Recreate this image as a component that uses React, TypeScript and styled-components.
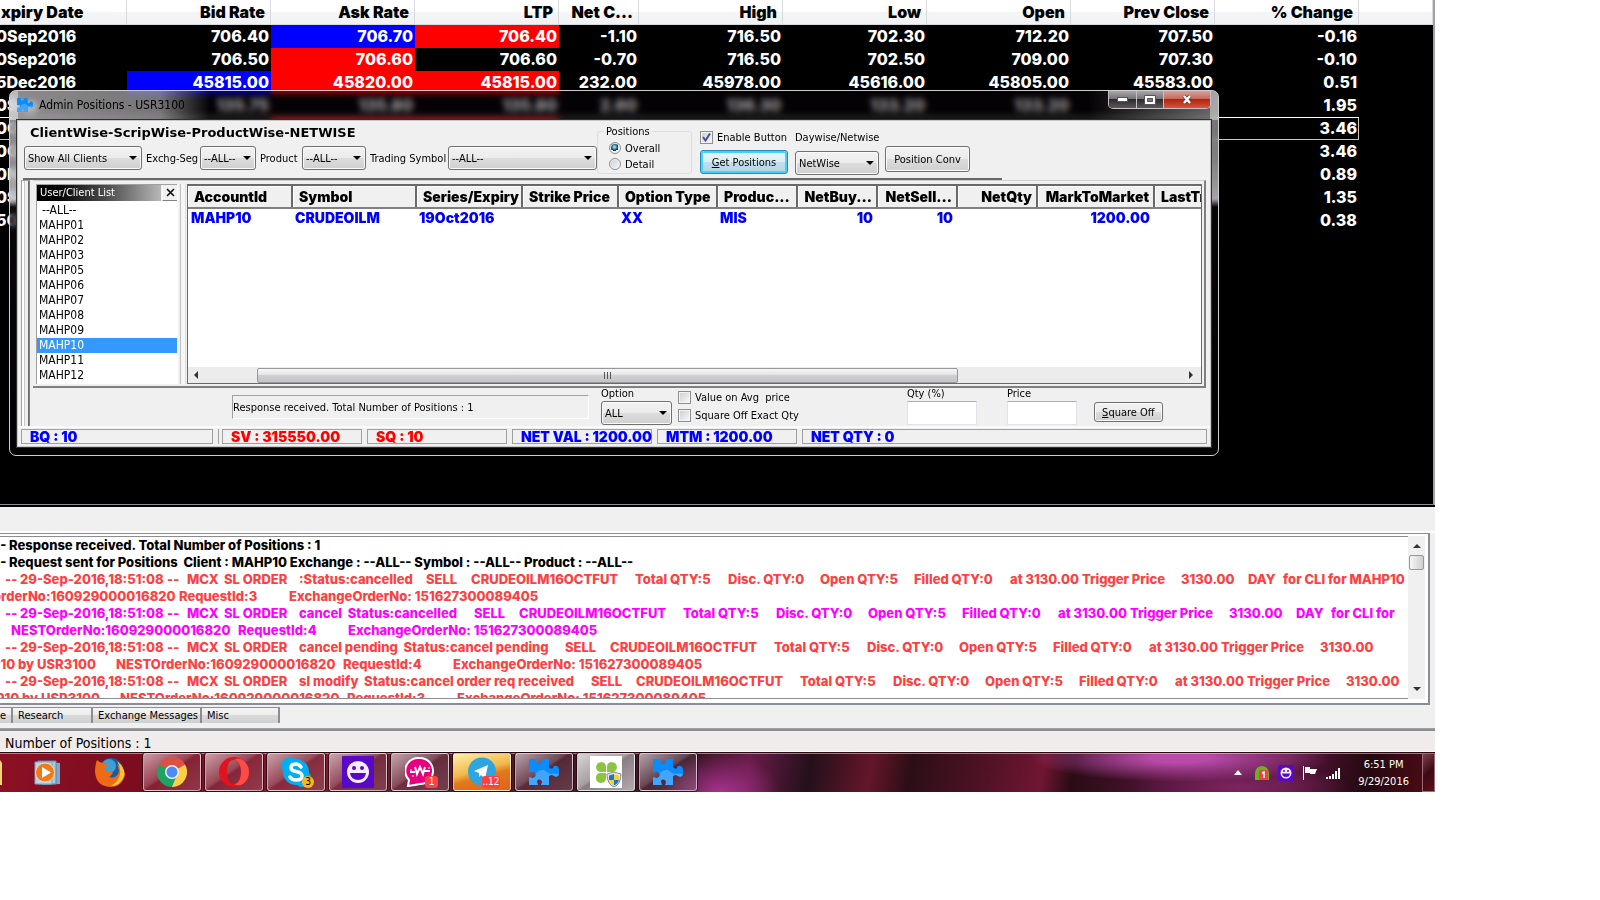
import React from 'react';
import styled, { createGlobalStyle, css } from 'styled-components';

const UI = '"DejaVu Sans Condensed", "Noto Sans", sans-serif';
const HEAVY = 'Inter, "Liberation Sans", sans-serif';

const Global = createGlobalStyle`
  *, *::before, *::after { box-sizing: border-box; }
  body { margin: 0; background: #fff; font: 11px/15px ${UI}; color: #000; }
  button, input, select { font: inherit; color: inherit; margin: 0; }
  table { border-collapse: collapse; border-spacing: 0; }
`;

const Desktop = styled.div`
  position: relative;
  margin-right: 165px;
  min-width: 1230px;
  overflow: hidden;
`;

/* ---------- market watch ---------- */

const Market = styled.section`
  height: 505px;
  background: #000;
  border-right: 2px solid #a0a0a8;
  border-bottom: 1px solid #8c8c94;
`;

const MarketTable = styled.table`
  width: 100%;
  table-layout: fixed;
  font: 800 16px/23px ${HEAVY};
  color: #fff;
`;

const MarketHead = styled.th<{ $left?: boolean }>`
  height: 25px;
  padding: 0 6px 0 1px;
  text-align: ${p => (p.$left ? 'left' : 'right')};
  font-weight: 900;
  line-height: 25px;
  color: #000;
  white-space: nowrap;
  background: linear-gradient(#fff 0 45%, #f4f5f7 50%, #f0f1f3);
  box-shadow: inset -1px -1px #d8d9dc;
`;

type Tone = 'up' | 'down' | undefined;

const MarketCell = styled.td<{ $tone?: Tone; $left?: boolean }>`
  height: 23px;
  padding: 0 2px 0 0;
  text-align: ${p => (p.$left ? 'left' : 'right')};
  ${p => p.$left && css`text-indent: -4px;`}
  white-space: nowrap;
  background: ${p => (p.$tone === 'up' ? '#0000ff' : p.$tone === 'down' ? '#ff0000' : '#000')};
`;

const MarketRow = styled.tr<{ $focus?: boolean }>`
  ${p => p.$focus && css`
    & > td:not(:last-child) { box-shadow: inset 0 1px #fff, inset 0 -1px #c8c8c8; }
    & > td:nth-last-child(2) { box-shadow: inset 0 1px #fff, inset -1px -1px #c8c8c8; }
  `}
`;

const COLS = [127, 144, 144, 144, 80, 144, 144, 144, 144, 144];
const HEADS = ['xpiry Date', 'Bid Rate', 'Ask Rate', 'LTP', 'Net C...', 'High', 'Low', 'Open', 'Prev Close', '% Change'];
const QUOTES: { cells: string[]; tone?: Record<number, Tone>; focus?: boolean }[] = [
  { cells: ['0Sep2016', '706.40', '706.70', '706.40', '-1.10', '716.50', '702.30', '712.20', '707.50', '-0.16'], tone: { 2: 'up', 3: 'down' } },
  { cells: ['0Sep2016', '706.50', '706.60', '706.60', '-0.70', '716.50', '702.50', '709.00', '707.30', '-0.10'], tone: { 2: 'down' } },
  { cells: ['5Dec2016', '45815.00', '45820.00', '45815.00', '232.00', '45978.00', '45616.00', '45805.00', '45583.00', '0.51'], tone: { 1: 'up', 2: 'down', 3: 'down' } },
  { cells: ['0Sep', '135.75', '135.80', '135.80', '2.60', '136.30', '133.20', '133.20', '', '1.95'] },
  { cells: ['0Oct', '', '', '', '', '', '', '', '', '3.46'], tone: { 2: 'down', 3: 'down' }, focus: true },
  { cells: ['0Oct', '', '', '', '', '', '', '', '', '3.46'] },
  { cells: ['0Nov', '', '', '', '', '', '', '', '', '0.89'] },
  { cells: ['0Sep', '', '', '', '', '', '', '', '', '1.35'] },
  { cells: ['5Oct', '', '', '', '', '', '', '', '', '0.38'] },
];

/* ---------- floating window ---------- */

const Win = styled.section`
  position: absolute;
  left: 9px;
  right: 216px;
  top: 90px;
  padding: 0 7px 8px;
  border: 1px solid #cfcdd0;
  border-radius: 7px;
  background:
    linear-gradient(90deg, rgba(255,255,255,.55), rgba(255,255,255,.45) 150px, rgba(255,255,255,0) 200px) 0 0 / 100% 29px no-repeat,
    linear-gradient(270deg, rgba(255,255,255,.4), rgba(255,255,255,0) 130px) 0 0 / 100% 29px no-repeat,
    linear-gradient(rgba(255,255,255,.4), rgba(255,255,255,.55) 75px, rgba(235,230,238,.75) 108px, rgba(20,16,22,.2) 116px, rgba(0,0,0,0)) 0 0 / 8px 100% no-repeat,
    linear-gradient(rgba(255,255,255,.4), rgba(255,255,255,.5) 70px, rgba(235,230,238,.7) 108px, rgba(20,16,22,.2) 116px, rgba(0,0,0,0)) 100% 0 / 8px 100% no-repeat,
    rgba(12, 6, 12, .4);
  backdrop-filter: blur(3px);
`;

const TitleBar = styled.header`
  display: flex;
  align-items: flex-start;
  height: 29px;
`;

const Title = styled.h1`
  display: flex;
  align-items: center;
  gap: 6px;
  flex: 1;
  height: 28px;
  margin: 0;
  font: 12px/16px ${UI};
`;

const Caption = styled.div`
  display: flex;
  border: 1px solid #c5c0c5;
  border-top: 0;
  border-radius: 0 0 5px 5px;
  overflow: hidden;
`;

const CaptionButton = styled.button<{ $close?: boolean }>`
  display: grid;
  place-items: center;
  width: ${p => (p.$close ? 47 : 27)}px;
  height: 17px;
  padding: 0;
  border: 0;
  border-left: 1px solid #c5c0c5;
  &:first-child { border-left: 0; }
  background: ${p => (p.$close
    ? 'linear-gradient(#d9a09a, #c9695c 45%, #b3240e 50%, #d4553a)'
    : 'linear-gradient(#a9a6a9, #77747a 45%, #2d292d 50%, #5b575b)')};
`;

const Client = styled.div`
  border: 1px solid #c8c8c8;
  box-shadow: 0 0 0 1px #303030;
  background: #f0f0f0;
`;

const ToolBar = styled.form`
  display: flex;
  align-items: flex-start;
  height: 57px;
  padding: 3px 0 0 6px;
`;

const Filters = styled.div`
  flex: none;
  width: 573px;
`;

const Heading = styled.h2`
  margin: 0 0 5px;
  padding-left: 6px;
  font: bold 13px/17px "DejaVu Sans", sans-serif;
`;

const FilterRow = styled.div`
  display: flex;
  align-items: center;
  gap: 4px;
`;

const FieldLabel = styled.label<{ $w?: number; $tight?: boolean }>`
  flex: none;
  width: ${p => (p.$w ? `${p.$w}px` : 'auto')};
  line-height: ${p => (p.$tight ? 10 : 15)}px;
  white-space: nowrap;
`;

const SelectBox = styled.span<{ $w: number }>`
  position: relative;
  display: block;
  flex: none;
  width: ${p => p.$w}px;
  height: 24px;
  &::after {
    content: '';
    position: absolute;
    right: 5px;
    top: 10px;
    border: 4px solid transparent;
    border-top-color: #000;
    border-bottom: 0;
    pointer-events: none;
  }
  select {
    appearance: none;
    width: 100%;
    height: 100%;
    padding: 0 12px 0 3px;
    border: 1px solid #707070;
    border-radius: 3px;
    box-shadow: inset 0 0 0 1px #fafafa;
    background: linear-gradient(#f2f2f2, #ebebeb 50%, #dddddd 50%, #cfcfcf);
  }
`;

const Button = styled.button<{ $w: number; $h: number; $hot?: boolean }>`
  width: ${p => p.$w}px;
  height: ${p => p.$h}px;
  padding: 0;
  white-space: nowrap;
  border: 1px solid ${p => (p.$hot ? '#2c88b8' : '#707070')};
  border-radius: 3px;
  box-shadow: inset 0 0 0 ${p => (p.$hot ? '2px #48d1f8' : '1px #fafafa')};
  background: ${p => (p.$hot
    ? 'linear-gradient(#eaf4f9, #dcedf5 50%, #c4dfeb 50%, #b0d5e6)'
    : 'linear-gradient(#f2f2f2, #ebebeb 50%, #dddddd 50%, #cfcfcf)')};
`;

const PositionsBox = styled.fieldset`
  flex: none;
  width: 95px;
  height: 50px;
  margin: 0 8px 0 0;
  padding: 1px 0 0 11px;
  border: 1px solid #d5dfe5;
  border-radius: 3px;
  legend { margin-left: -5px; padding: 0 2px; }
`;

const Choice = styled.label`
  display: flex;
  align-items: center;
  gap: 4px;
  height: 16px;
  white-space: pre;
  input {
    appearance: none;
    flex: none;
    width: 13px;
    height: 13px;
    border: 1px solid #8e8f8f;
    background: linear-gradient(135deg, #c8ccd2, #fbfbfb) padding-box;
    box-shadow: inset 0 0 0 1px #f4f4f4;
  }
  input[type='radio'] { width: 12px; height: 12px; border-radius: 50%; }
  input[type='radio']:checked { background: radial-gradient(circle at 45% 40%, #7fd4f5 0 1px, #17506f 3px, #0d2f4a 4px, #f0f0f0 4px); }
`;

const TickBox = styled.span`
  display: grid;
  svg, input { grid-area: 1 / 1; }
  svg { z-index: 1; pointer-events: none; }
`;

const Stack = styled.div<{ $gap: number; $top?: number; $right?: number }>`
  display: flex;
  flex: none;
  flex-direction: column;
  align-items: flex-start;
  gap: ${p => p.$gap}px;
  padding-top: ${p => p.$top ?? 0}px;
  margin-right: ${p => p.$right ?? 0}px;
`;

const Rule = styled.hr`
  width: 979px;
  height: 2px;
  margin: 0 0 0 5px;
  border: 0;
  background: #696969;
`;

const Workspace = styled.div`
  display: flex;
  gap: 3px;
  padding: 0 4px 0 3px;
`;

const Splitter = styled.div`
  flex: none;
  width: 9px;
  border: 1px solid #a0a0a0;
  border-right-color: #808080;
  border-bottom: 0;
  padding-left: 2px;
  background: #fff;
  &::before { content: ''; display: block; height: 100%; background: #f0f0f0; border-left: 1px solid #c8c8c8; border-right: 1px solid #696969; }
`;

const WorkColumn = styled.div`
  flex: 1;
  min-width: 0;
`;

const Panels = styled.div`
  display: flex;
  height: 208px;
  padding: 3px 2px 2px 3px;
  border-top: 1px solid #d0d0d0;
  border-right: 2px solid #808080;
  border-bottom: 2px solid #808080;
`;

const ClientPanel = styled.aside`
  flex: none;
  width: 142px;
  padding-right: 1px;
  border-left: 1px solid #a0a0a0;
  background: #fff;
`;

const PanelHead = styled.div`
  display: flex;
  height: 17px;
  background: #f0f0f0;
  border-top: 1px solid #a0a0a0;
`;

const PanelTitle = styled.h3`
  flex: 1;
  margin: 0;
  padding-left: 3px;
  font: 11px/15px ${UI};
  color: #fff;
  background: linear-gradient(90deg, #000 15%, #555 60%, #b8b8b8);
`;

const PanelClose = styled.button`
  width: 15px;
  padding: 0;
  margin-left: 1px;
  border: 0;
  border-bottom: 1px solid #808080;
  border-left: 1px solid #fff;
  background: #f0f0f0;
  display: grid;
  place-items: center;
`;

const ClientList = styled.ul`
  list-style: none;
  margin: 0;
  padding: 2px 0 0;
  font-size: 12px;
`;

const ClientItem = styled.li<{ $picked?: boolean; $root?: boolean }>`
  height: 15px;
  padding-left: ${p => (p.$root ? 5 : 2)}px;
  line-height: 15px;
  color: ${p => (p.$picked ? '#fff' : '#000')};
  background: ${p => (p.$picked ? '#3399ff' : 'transparent')};
`;

const Divider = styled.div`
  flex: none;
  width: 6px;
  margin: 0 1px 0 2px;
  border-left: 1px solid #c0c0c0;
  border-right: 1px solid #e0e0e0;
  background: #f6f6f6;
`;

const GridPane = styled.div`
  display: flex;
  flex-direction: column;
  flex: 1;
  min-width: 0;
  overflow: hidden;
  border: 1px solid #696969;
  border-top-width: 2px;
  background: #fff;
`;

const PositionsTable = styled.table`
  width: 1060px;
  table-layout: fixed;
  font: 900 14px/18px ${HEAVY};
`;

const PosHead = styled.th<{ $right?: boolean }>`
  height: 22px;
  padding: 0 4px 0 6px;
  overflow: hidden;
  font-weight: 900;
  white-space: nowrap;
  text-align: ${p => (p.$right ? 'right' : 'left')};
  background: #f0f0f0;
  border-right: 2px solid #696969;
  border-bottom: 2px solid #808080;
  box-shadow: inset 1px 1px #fff;
`;

const PosCell = styled.td<{ $right?: boolean }>`
  padding: 0 4px 0 3px;
  text-align: ${p => (p.$right ? 'right' : 'left')};
  white-space: nowrap;
  color: #0000ff;
`;

const POS: [string, string, number, boolean?][] = [
  ['AccountId', 'MAHP10', 104], ['Symbol', 'CRUDEOILM', 124], ['Series/Expiry', '19Oct2016', 106],
  ['Strike Price', '', 96], ['Option Type', 'XX', 99], ['Produc...', 'MIS', 80],
  ['NetBuy...', '10', 80, true], ['NetSell...', '10', 80, true], ['NetQty', '', 80, true],
  ['MarkToMarket', '1200.00', 117, true], ['LastTrade', '', 94],
];

const HScroll = styled.div`
  display: flex;
  align-items: center;
  justify-content: space-between;
  height: 16px;
  margin-top: auto;
  padding: 0 6px 0 4px;
  background: #ececec;
`;

const HThumb = styled.div`
  display: grid;
  place-items: center;
  flex: none;
  width: 701px;
  height: 15px;
  margin-left: 57px;
  margin-right: auto;
  border: 1px solid #979797;
  border-radius: 2px;
  background: linear-gradient(#f6f6f6, #e4e4e4 45%, #cfcfd2 50%, #c4c4c8);
`;

const ActionBar = styled.form`
  display: flex;
  align-items: flex-start;
  height: 38px;
  padding-top: 1px;
`;

const Response = styled.output`
  flex: none;
  width: 357px;
  height: 24px;
  margin: 6px 12px 0 199px;
  line-height: 24px;
  white-space: nowrap;
  border: 1px solid #a0a0a0;
  border-right-color: #fff;
  border-bottom-color: #fff;
`;

const TextBox = styled.input`
  width: 70px;
  height: 24px;
  padding: 0 3px;
  border: 1px solid #e2e3ea;
  border-top-color: #abadb3;
  background: #fff;
`;

const StatusStrip = styled.footer`
  display: flex;
  gap: 5px;
  height: 20px;
  padding: 1px 3px 2px 3px;
  border-top: 2px solid #fafafa;
  font: 900 14px/14px ${HEAVY};
`;

const StatusCell = styled.div<{ $w?: number; $tone: string }>`
  flex: ${p => (p.$w ? 'none' : '1')};
  width: ${p => (p.$w ? `${p.$w}px` : 'auto')};
  padding-left: 8px;
  white-space: nowrap;
  color: ${p => p.$tone};
  border: 1px solid #a0a0a0;
`;

const StatusSplit = styled.div`
  flex: none;
  width: 1px;
  margin-right: -2px;
  background: #a0a0a0;
`;

/* ---------- message log ---------- */

const Gap = styled.div`
  height: 28px;
  background: #f0f0f0;
  border-top: 2px solid #000;
  border-bottom: 2px solid #fff;
`;

const LogFrame = styled.section`
  display: flex;
  height: 172px;
  margin-right: 5px;
  padding: 2px 0 4px;
  border: solid #8c8c94;
  border-width: 1px 2px 2px 0;
  background: #fff;
`;

const LogOuter = styled.div`
  background: #f0f0f0;
`;

const LogBody = styled.div`
  flex: 1;
  min-width: 0;
  overflow: hidden;
  border-top: 1px solid #8c8c94;
  border-bottom: 1px solid #8c8c94;
  font: 800 13px/17px ${HEAVY};
`;

const LogLine = styled.div<{ $tone: string; $x: number }>`
  display: flex;
  height: 17px;
  margin-left: ${p => p.$x}px;
  white-space: pre;
  color: ${p => p.$tone};
`;

const LogField = styled.span<{ $w: number }>`
  flex: none;
  width: ${p => p.$w}px;
`;

const VScroll = styled.div`
  display: flex;
  flex: none;
  flex-direction: column;
  align-items: center;
  width: 17px;
  margin-right: 3px;
  padding: 6px 0;
  background: #f0f0f0;
  svg:last-child { margin-top: auto; }
`;

const VThumb = styled.div`
  width: 15px;
  height: 15px;
  margin-top: 5px;
  border: 1px solid #979797;
  border-radius: 2px;
  background: linear-gradient(90deg, #f6f6f6, #e4e4e4 45%, #cfcfd2);
`;

const Tabs = styled.nav`
  display: flex;
  height: 24px;
  padding-top: 2px;
  background: #f0f0f0;
  border-bottom: 1px solid #a0a0a0;
`;

const Tab = styled.button<{ $w: number }>`
  width: ${p => p.$w}px;
  height: 16px;
  padding: 0 0 0 5px;
  text-align: left;
  line-height: 14px;
  white-space: nowrap;
  border: 0;
  border-top: 1px solid #8c8c94;
  border-right: 2px solid #8c8c94;
  background: linear-gradient(#f4f4f4, #ececec 50%, #dadada 50%, #d0d0d0);
  &:first-child { padding-left: 0; }
`;

const AppStatus = styled.footer`
  height: 23px;
  padding: 1px 0 0 5px;
  border-top: 2px solid #8c8c94;
  border-bottom: 1px solid #fff;
  background: #f0ecec;
  font: 14px/22px ${UI};
`;

/* ---------- task bar ---------- */

const TaskBar = styled.nav`
  display: flex;
  height: 40px;
  border-top: 1px solid #2b0a12;
  box-shadow: inset 0 1px rgba(255, 255, 255, .45);
  background:
    radial-gradient(ellipse 60px 40px at 720px 40px, #a8328f, rgba(150, 40, 120, 0)),
    radial-gradient(ellipse 150px 24px at 1180px 5px, #b84aa8 20%, rgba(150, 40, 120, 0)),
    radial-gradient(ellipse 110px 24px at 1240px 34px, #7d2460, rgba(120, 30, 90, 0)),
    linear-gradient(100deg, #8c1024 0, #7c0c20 140px, #7c1c30 320px, #5a1c2e 430px, #4c1828 520px, #3a1424 690px, #6a1c4a 740px, #24101a 800px, #64162a 860px, #2c0e16 900px, #4e1224 970px, #701632 1030px, #2a0c14 1060px, #4c1434 1150px, #5a1640 1270px, #25090f 1350px, #5a0c18 1435px);
`;

const Launch = styled.button<{ $w: number }>`
  display: grid;
  place-items: center;
  width: ${p => p.$w}px;
  padding: 0;
  border: 0;
  background: none;
`;

const Tasks = styled.div`
  display: flex;
  gap: 4px;
  flex: 1;
  padding-left: 17px;
`;

const Task = styled.button<{ $look?: 'alert' | 'active' }>`
  display: grid;
  place-items: center;
  width: 58px;
  height: 38px;
  padding: 0;
  border: 1px solid rgba(255, 255, 255, .55);
  border-radius: 3px;
  box-shadow: 0 0 0 1px rgba(20, 0, 8, .6);
  background: ${p =>
    p.$look === 'alert' ? 'linear-gradient(165deg, #fdf0a8, #f2b84a 45%, #e07a1c 60%, #e2601c)'
    : p.$look === 'active' ? 'linear-gradient(145deg, #d8d4d6, #a8a0a4 45%, #8a7c84 50%, #b4aab0)'
    : 'linear-gradient(145deg, rgba(255,255,255,.6), rgba(255,255,255,.22) 45%, rgba(255,255,255,.08) 50%, rgba(255,255,255,.16))'};
`;

const Tray = styled.div`
  display: flex;
  align-items: center;
  gap: 8px;
  margin-right: 13px;
  color: #fff;
  & > svg:first-child { margin-right: 4px; }
`;

const Clock = styled.time`
  margin-left: 8px;
  text-align: center;
  font: 11px/17px ${UI};
`;

const ShowDesktop = styled.button`
  width: 13px;
  height: 39px;
  padding: 0;
  border: 1px solid #9c6c74;
  background: linear-gradient(135deg, #7a4450, #3c0a14 50%, #5c0c1c);
`;

/* ---------- drawings ---------- */

const Puzzle = ({ size = 30 }: { size?: number }) => (
  <svg width={size} height={size * 26 / 30} viewBox="0 0 30 26" aria-hidden="true">
    <path d="M0 0H7L8 1Q6 4 9 5Q13 5 13 2L12 0H20V8Q22 11 24 9Q24 6 28 7Q31 9 30 15Q29 19 25 17Q23 15 20 17V26H12Q14 23 12 21Q9 19 8 22Q8 24 9 26H0V18Q2 19 4 19Q7 18 6 14Q4 12 2 13L0 14Z" fill="#0a8cff" />
    <path d="M0 18Q2 19 4 19Q8 18 7 14Q11 10 15 11Q19 14 21 15Q26 14 30 15Q29 19 25 17Q23 15 20 17V26H12Q14 23 12 21Q9 19 8 22Q8 24 9 26H0Z" fill="#42a5ff" />
  </svg>
);

const Face = ({ size, r }: { size: number; r: number }) => (
  <svg width={size} height={size} viewBox="0 0 32 32" aria-hidden="true">
    <rect width="32" height="32" rx={r} fill="#5a08c8" />
    <circle cx="16" cy="16" r="11" fill="#f4ecff" />
    <circle cx="12" cy="12" r="2" fill="#5a08c8" /><circle cx="20" cy="12" r="2" fill="#5a08c8" />
    <path d="M8 17H24Q23 24 16 24Q9 24 8 17Z" fill="#5a08c8" />
  </svg>
);

const Badge = styled.span<{ $bg: string; $ink: string; $round?: boolean; $w: number }>`
  position: absolute;
  right: -3px;
  bottom: -1px;
  width: ${p => p.$w}px;
  height: 12px;
  border-radius: ${p => (p.$round ? 6 : 3)}px;
  background: ${p => p.$bg};
  color: ${p => p.$ink};
  font: 10px/12px ${UI};
  white-space: nowrap;
  text-align: center;
`;

const IconWrap = styled.span`
  position: relative;
  display: grid;
  place-items: center;
`;

const Folder = () => (
  <svg width="2" height="26" viewBox="0 0 2 26" aria-hidden="true"><path d="M0 0L2 3V25H0Z" fill="#f0d878" /></svg>
);

const Player = () => (
  <svg width="28" height="26" viewBox="0 0 28 26" aria-hidden="true">
    <path d="M8 1L26 3V24L8 25Z" fill="#7fa9c4" /><path d="M4 1H22V24H4Z" fill="#a5cbe2" stroke="#5d8aa8" />
    <path d="M1 2H18V24H1Z" fill="#b9d6e8" stroke="#7da2bc" />
    <circle cx="11" cy="12.500" r="9.500" fill="#f07a1a" stroke="#fbd9b8" /><path d="M8 7L17 12.500L8 18Z" fill="#fff" />
  </svg>
);

const Firefox = () => (
  <svg width="30" height="31" viewBox="0 0 30 31" aria-hidden="true">
    <circle cx="16" cy="13" r="12" fill="#1c5c9c" /><circle cx="14" cy="9" r="7" fill="#3ba0d8" />
    <path d="M2 3Q5 6 8 6L13 7L10 11Q9 14 13 15Q17 14 18 16Q16 19 14 20Q20 22 23 17Q25 13 22 7Q30 12 30 18Q27 30 15 30Q1 29 0 15Q0 8 2 3Z" fill="#ee6a14" />
    <path d="M22 4Q31 11 29 19Q25 29 16 29Q24 24 25 17Q26 10 22 4Z" fill="#fbc53a" />
  </svg>
);

const Chrome = () => (
  <svg width="30" height="30" viewBox="0 0 30 30" aria-hidden="true">
    <path d="M15 15L2 7.500A15 15 0 0 1 28 7.500Z" fill="#dd5144" />
    <path d="M15 15L28 7.500A15 15 0 0 1 15 30Z" fill="#ffcd46" />
    <path d="M15 15L15 30A15 15 0 0 1 2 7.500Z" fill="#1da462" />
    <path d="M15 8H28.200L28 7.500A15 15 0 0 0 15 0Z" fill="#dd5144" />
    <path d="M20 19L15 30L11 20Z" fill="#1da462" /><path d="M20 18L15 30L24 27Z" fill="#ffcd46" />
    <circle cx="15" cy="15" r="7" fill="#f4f4f4" /><circle cx="15" cy="15" r="5.500" fill="#4c8bf5" />
  </svg>
);

const Opera = () => (
  <svg width="30" height="30" viewBox="0 0 30 30" aria-hidden="true">
    <path fillRule="evenodd" d="M15 0A15 15 0 1 0 15 30A15 15 0 1 0 15 0ZM15 3C20 3 22 9 22 15S20 27 15 27S8 21 8 15S10 3 15 3Z" fill="#e3121f" />
    <path d="M15 3Q19 0 24 3Q30 8 30 15Q30 24 22 28Q18 29 15 27C20 27 22 21 22 15S20 3 15 3Z" fill="#ff4a48" />
  </svg>
);

const Skype = () => (
  <svg width="30" height="30" viewBox="0 0 30 30" aria-hidden="true">
    <circle cx="9" cy="9" r="9" fill="#00aff0" /><circle cx="21" cy="21" r="9" fill="#00aff0" /><circle cx="15" cy="15" r="13" fill="#00aff0" />
    <path d="M20 10Q18 7 15 7Q10 7 10 10.500Q10 13.500 15 14.500Q21 15.500 21 19Q21 23 15 23Q11 23 9 20" fill="none" stroke="#fff" strokeWidth="3.500" strokeLinecap="round" />
  </svg>
);

const WChat = () => (
  <svg width="30" height="30" viewBox="0 0 30 30" aria-hidden="true">
    <path d="M15 1A13 13 0 0 1 15 27Q10 28 3 29L4 23A13 13 0 0 1 15 1Z" fill="#e6007e" stroke="#fff" strokeWidth="2" />
    <path d="M10 10L12 17L15 10L18 17L20 10M5 15H10M19 14H25" fill="none" stroke="#fff" strokeWidth="2" />
    <path d="M6 12V14M24 10V12M8 18V20" stroke="#f8a8d0" strokeWidth="1.500" />
  </svg>
);

const Telegram = () => (
  <svg width="30" height="30" viewBox="0 0 30 30" aria-hidden="true">
    <circle cx="15" cy="14.500" r="14" fill="#2ca5e0" /><path d="M7 14L21 8L18 22L14 18L12 20V16Z" fill="#fff" />
  </svg>
);

const Clover = () => (
  <svg width="32" height="32" viewBox="0 0 32 32" aria-hidden="true">
    <rect width="32" height="32" fill="#fff" />
    <path d="M16 16H10A5 5 0 1 1 16 10ZM17 16V10A5 5 0 1 1 23 16ZM16 17V22A5 5 0 1 1 10 17Z" fill="#8bc53f" />
    <path d="M24 16L31 18Q31 28 24 31Q17 28 17 18Z" fill="#e4e8ec" stroke="#7c8894" />
    <path d="M24 18V24H19V19.500ZM24 24H29Q28 28 24 29.500Z" fill="#1c74d0" /><path d="M24 18L29 19.500V24H24ZM19 24H24V29.500Q20 28 19 24Z" fill="#f8d428" />
  </svg>
);

const Arrow = ({ d }: { d: string }) => (
  <svg width="8" height="8" viewBox="0 0 8 8" aria-hidden="true"><path d={d} fill="#333" /></svg>
);

/* ---------- controls ---------- */

const Drop = ({ w, id, value, label }: { w: number; id: string; value: string; label?: string }) => (
  <SelectBox $w={w}>
    <select id={id} aria-label={label} defaultValue={value}><option>{value}</option></select>
  </SelectBox>
);

const RED = '#ff4040';
const PINK = '#ff00ff';

const Order = ({ tone, status, w, tail }: { tone: string; status: string; w: number; tail: string[] }) => (
  <LogLine $tone={tone} $x={5}>
    <LogField $w={15}>--</LogField>
    <LogField $w={147}>29-Sep-2016,18:51:08</LogField>
    <LogField $w={20}>--</LogField>
    <LogField $w={37}>MCX</LogField>
    <LogField $w={75}>SL ORDER</LogField>
    <LogField $w={w}>{status}</LogField>
    <LogField $w={45}>SELL</LogField>
    <LogField $w={164}>CRUDEOILM16OCTFUT</LogField>
    <LogField $w={93}>Total QTY:5</LogField>
    <LogField $w={92}>Disc. QTY:0</LogField>
    <LogField $w={94}>Open QTY:5</LogField>
    <LogField $w={96}>Filled QTY:0</LogField>
    <LogField $w={171}>at 3130.00 Trigger Price</LogField>
    <LogField $w={67}>3130.00</LogField>
    {tail.map(t => <LogField key={t} $w={t === 'DAY' ? 35 : 130}>{t}</LogField>)}
  </LogLine>
);

const OrderRef = ({ tone, x, by, nest, nestW = 227, req }: { tone: string; x: number; by?: string; nest: string; nestW?: number; req: string }) => (
  <LogLine $tone={tone} $x={x}>
    {by && <LogField $w={124}>{by}</LogField>}
    <LogField $w={nestW}>{nest}</LogField>
    <LogField $w={110}>{req}</LogField>
    <LogField $w={250}>ExchangeOrderNo: 151627300089405</LogField>
  </LogLine>
);

const CLIENTS = ['--ALL--', 'MAHP01', 'MAHP02', 'MAHP03', 'MAHP05', 'MAHP06', 'MAHP07', 'MAHP08', 'MAHP09', 'MAHP10', 'MAHP11', 'MAHP12'];

function AdminPositions() {
  return (
    <Win>
      <TitleBar>
        <Title><Puzzle size={16} />Admin Positions - USR3100</Title>
        <Caption>
          <CaptionButton aria-label="Minimize"><svg width="11" height="5"><rect x="0.500" y="0.500" width="10" height="4" fill="#fff" stroke="#555" /></svg></CaptionButton>
          <CaptionButton aria-label="Maximize"><svg width="12" height="10"><path d="M.5.5H11.500V9.500H.5Z" fill="#fff" stroke="#555" /><path d="M3.500 3.500H8.500V6.500H3.500Z" fill="#777" stroke="#555" /></svg></CaptionButton>
          <CaptionButton $close aria-label="Close"><svg width="12" height="11" viewBox="0 0 12 11"><path d="M3 2L9 9M9 2L3 9" stroke="#633" strokeWidth="4" /><path d="M3 2L9 9M9 2L3 9" stroke="#fff" strokeWidth="2.500" /></svg></CaptionButton>
        </Caption>
      </TitleBar>
      <Client>
        <ToolBar>
          <Filters>
            <Heading>ClientWise-ScripWise-ProductWise-NETWISE</Heading>
            <FilterRow>
              <Drop w={118} id="who" value="Show All Clients" label="Clients" />
              <FieldLabel $w={50} htmlFor="seg">Exchg-Seg</FieldLabel>
              <Drop w={56} id="seg" value="--ALL--" />
              <FieldLabel $w={38} htmlFor="prod">Product</FieldLabel>
              <Drop w={64} id="prod" value="--ALL--" />
              <FieldLabel $w={74} htmlFor="sym">Trading Symbol</FieldLabel>
              <Drop w={149} id="sym" value="--ALL--" />
            </FilterRow>
          </Filters>
          <PositionsBox>
            <legend>Positions</legend>
            <Choice><input type="radio" name="mode" defaultChecked />Overall</Choice>
            <Choice><input type="radio" name="mode" />Detail</Choice>
          </PositionsBox>
          <Stack $gap={5} $top={5} $right={7}>
            <Choice>
              <TickBox>
                <input type="checkbox" defaultChecked />
                <svg width="13" height="13"><path d="M3 6L5.500 9.500L10 2.500" fill="none" stroke="#45519c" strokeWidth="2" /></svg>
              </TickBox>
              Enable Button
            </Choice>
            <Button type="button" $w={88} $h={24} $hot><u>G</u>et Positions</Button>
          </Stack>
          <Stack $gap={6} $top={6} $right={6}>
            <FieldLabel $w={84} htmlFor="net">Daywise/Netwise</FieldLabel>
            <Drop w={84} id="net" value="NetWise" />
          </Stack>
          <Stack $gap={0} $top={22}>
            <Button type="button" $w={85} $h={26}>Position Conv</Button>
          </Stack>
        </ToolBar>
        <Rule />
        <Workspace>
          <Splitter />
          <WorkColumn>
            <Panels>
              <ClientPanel>
                <PanelHead>
                  <PanelTitle>User/Client List</PanelTitle>
                  <PanelClose aria-label="Close list"><svg width="9" height="9"><path d="M1 1L8 8M8 1L1 8" stroke="#000" strokeWidth="1.500" /></svg></PanelClose>
                </PanelHead>
                <ClientList>
                  {CLIENTS.map((c, i) => <ClientItem key={c} $root={i === 0} $picked={c === 'MAHP10'}>{c}</ClientItem>)}
                </ClientList>
              </ClientPanel>
              <Divider />
              <GridPane>
                <PositionsTable>
                  <colgroup>{POS.map(p => <col key={p[0]} width={p[2]} />)}</colgroup>
                  <thead><tr>{POS.map(p => <PosHead key={p[0]} $right={p[3]}>{p[0]}</PosHead>)}</tr></thead>
                  <tbody><tr>{POS.map(p => <PosCell key={p[0]} $right={p[3]}>{p[1]}</PosCell>)}</tr></tbody>
                </PositionsTable>
                <HScroll>
                  <Arrow d="M6 0V8L2 4Z" />
                  <HThumb><svg width="9" height="7"><path d="M1.500 0V7M4.500 0V7M7.500 0V7" stroke="#555" /></svg></HThumb>
                  <Arrow d="M2 0V8L6 4Z" />
                </HScroll>
              </GridPane>
            </Panels>
            <ActionBar>
              <Response>Response received. Total Number of Positions : 1</Response>
              <Stack $gap={2} $right={6}>
                <FieldLabel $tight htmlFor="opt">Option</FieldLabel>
                <Drop w={71} id="opt" value="ALL" />
              </Stack>
              <Stack $gap={2} $right={108}>
                <Choice><input type="checkbox" />Value on Avg  price</Choice>
                <Choice><input type="checkbox" />Square Off Exact Qty</Choice>
              </Stack>
              <Stack $gap={2} $right={30}>
                <FieldLabel $tight htmlFor="qty">Qty (%)</FieldLabel>
                <TextBox id="qty" />
              </Stack>
              <Stack $gap={2} $right={17}>
                <FieldLabel $tight htmlFor="price">Price</FieldLabel>
                <TextBox id="price" />
              </Stack>
              <Stack $gap={0} $top={13}>
                <Button type="button" $w={69} $h={20}><u>S</u>quare Off</Button>
              </Stack>
            </ActionBar>
          </WorkColumn>
        </Workspace>
        <StatusStrip>
          <StatusCell $w={192} $tone="#0000ff">BQ : 10</StatusCell>
          <StatusSplit />
          <StatusCell $w={140} $tone="#ff0000">SV : 315550.00</StatusCell>
          <StatusCell $w={140} $tone="#ff0000">SQ : 10</StatusCell>
          <StatusCell $w={140} $tone="#0000ff">NET VAL : 1200.00</StatusCell>
          <StatusCell $w={140} $tone="#0000ff">MTM : 1200.00</StatusCell>
          <StatusCell $tone="#0000ff">NET QTY : 0</StatusCell>
        </StatusStrip>
      </Client>
    </Win>
  );
}

export default function App() {
  return (
    <>
      <Global />
      <Desktop>
        <Market>
          <MarketTable>
            <colgroup>{COLS.map((w, i) => <col key={i} width={w} />)}<col /></colgroup>
            <thead><tr>{HEADS.map((h, i) => <MarketHead key={h} $left={i === 0}>{h}</MarketHead>)}<MarketHead /></tr></thead>
            <tbody>
              {QUOTES.map((q, r) => (
                <MarketRow key={r} $focus={q.focus}>
                  {q.cells.map((c, i) => <MarketCell key={i} $left={i === 0} $tone={q.tone?.[i]}>{c}</MarketCell>)}
                  <MarketCell />
                </MarketRow>
              ))}
            </tbody>
          </MarketTable>
        </Market>
        <AdminPositions />
        <Gap />
        <LogOuter>
          <LogFrame>
            <LogBody>
              <LogLine $tone="#000" $x={-6}>-- Response received. Total Number of Positions : 1</LogLine>
              <LogLine $tone="#000" $x={-6}>-- Request sent for Positions  Client : MAHP10 Exchange : --ALL-- Symbol : --ALL-- Product : --ALL--</LogLine>
              <Order tone={RED} status=":Status:cancelled" w={127} tail={['DAY', 'for CLI for MAHP10']} />
              <OrderRef tone={RED} x={-7} nest="orderNo:160929000016820" nestW={186} req="RequestId:3" />
              <Order tone={PINK} status="cancel  Status:cancelled" w={175} tail={['DAY', 'for CLI for']} />
              <OrderRef tone={PINK} x={11} nest="NESTOrderNo:160929000016820" req="RequestId:4" />
              <Order tone={RED} status="cancel pending  Status:cancel pending" w={266} tail={[]} />
              <OrderRef tone={RED} x={-8} by="P10 by USR3100" nest="NESTOrderNo:160929000016820" req="RequestId:4" />
              <Order tone={RED} status="sl modify  Status:cancel order req received" w={292} tail={[]} />
              <OrderRef tone={RED} x={-4} by="P10 by USR3100" nest="NESTOrderNo:160929000016820" req="RequestId:3" />
            </LogBody>
            <VScroll>
              <Arrow d="M0 6H8L4 2Z" />
              <VThumb />
              <Arrow d="M0 2H8L4 6Z" />
            </VScroll>
          </LogFrame>
        </LogOuter>
        <Tabs>
          <Tab $w={13}>e</Tab>
          <Tab $w={80}>Research</Tab>
          <Tab $w={109}>Exchange Messages</Tab>
          <Tab $w={78}>Misc</Tab>
        </Tabs>
        <AppStatus>Number of Positions : 1</AppStatus>
        <TaskBar>
          <Launch $w={2} aria-label="Explorer"><Folder /></Launch>
          <Launch $w={92} aria-label="Media player"><Player /></Launch>
          <Launch $w={32} aria-label="Firefox"><Firefox /></Launch>
          <Tasks>
            <Task aria-label="Chrome"><Chrome /></Task>
            <Task aria-label="Opera"><Opera /></Task>
            <Task aria-label="Skype"><IconWrap><Skype /><Badge $bg="#ffb514" $ink="#000" $round $w={12}>3</Badge></IconWrap></Task>
            <Task aria-label="Messenger"><Face size={32} r={1} /></Task>
            <Task aria-label="Chat"><IconWrap><WChat /><Badge $bg="#ff4040" $ink="#fff" $w={13}>1</Badge></IconWrap></Task>
            <Task $look="alert" aria-label="Telegram"><IconWrap><Telegram /><Badge $bg="#ff4040" $ink="#fff" $w={18}>..12</Badge></IconWrap></Task>
            <Task aria-label="Trader"><Puzzle /></Task>
            <Task $look="active" aria-label="Clover"><Clover /></Task>
            <Task aria-label="Trader positions"><Puzzle /></Task>
          </Tasks>
          <Tray>
            <svg width="8" height="5" aria-hidden="true"><path d="M0 5L4 0L8 5Z" fill="#fff" /></svg>
            <svg width="16" height="16" viewBox="0 0 16 16" aria-hidden="true"><path d="M1 15V8A7 7 0 0 1 15 8V15Z" fill="#62b420" /><rect x="5" y="5" width="9" height="10" rx="1" fill="#f04438" /><path d="M8 8L10 7V13" fill="none" stroke="#fff" strokeWidth="1.500" /></svg>
            <Face size={16} r={3} />
            <svg width="16" height="16" viewBox="0 0 16 16" aria-hidden="true"><path d="M1.500 1V15" stroke="#fff" /><path d="M3 2H8V4H15L13 9H8V8H3Z" fill="#fff" /></svg>
            <svg width="16" height="12" viewBox="0 0 16 12" aria-hidden="true"><path d="M0 10H2V12H0ZM3 9H5V12H3ZM6 7H8V12H6ZM9 4H11V12H9ZM12 1H14V12H12Z" fill="#fff" /></svg>
            <Clock>6:51 PM<br />9/29/2016</Clock>
          </Tray>
          <ShowDesktop aria-label="Show desktop" />
        </TaskBar>
      </Desktop>
    </>
  );
}
